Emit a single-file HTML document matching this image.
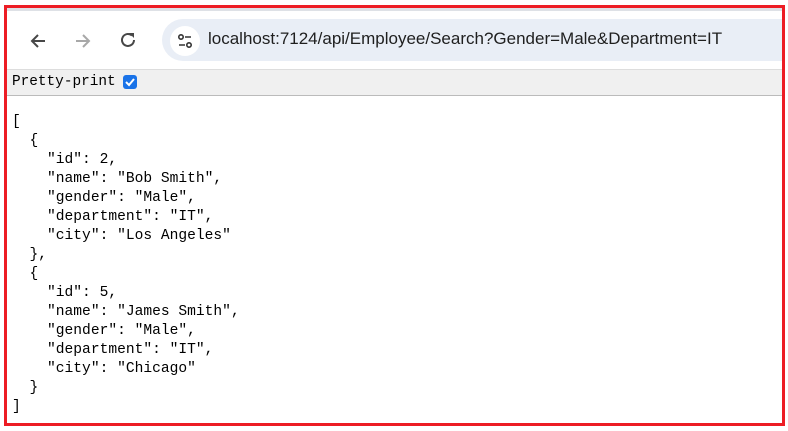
<!DOCTYPE html><html><head><style>
body{margin:0;width:788px;height:431px;background:#fff;position:relative;overflow:hidden;font-family:"Liberation Sans",sans-serif}
.frame{position:absolute;left:4px;top:5px;width:775px;height:415px;border:3px solid #ed1c24}
.tabs{position:absolute;left:7px;top:8px;width:775px;height:3px;background:#dee1e6}
.tool{position:absolute;left:7px;top:11px;width:775px;height:58px;background:#fff}
.url{position:absolute;left:162px;top:19px;width:620px;height:42px;background:#e9eef6;border-radius:21px 0 0 21px}
.url span{position:absolute;left:46px;top:10px;font-size:17px;color:#1f1f1f}
.ic{position:absolute;left:170px;top:26px;width:30px;height:30px;border-radius:15px;background:#fff}
.pp{position:absolute;left:7px;top:69px;width:775px;height:25px;background:#f0f0f0;border-top:1px solid #ddd;border-bottom:1px solid #bbb}
.pp span{position:absolute;left:5px;top:4px;font:14.4px "Liberation Mono",monospace;color:#000}
.cb{position:absolute;left:116px;top:5px;width:14px;height:14px;background:#1a73e8;border-radius:3px}
pre{position:absolute;left:12px;top:113px;margin:0;font:14.6px/19px "Liberation Mono",monospace;color:#000}
</style></head><body>
<div class="tabs"></div>
<div class="tool">
<svg style="position:absolute;left:22px;top:21px" width="18" height="18" viewBox="0 0 18 18"><path d="M16 9H3M9 3L3 9l6 6" stroke="#474747" stroke-width="2" fill="none"/></svg>
<svg style="position:absolute;left:67px;top:21px" width="18" height="18" viewBox="0 0 18 18"><path d="M2 9h13M9 3l6 6-6 6" stroke="#a8a8a8" stroke-width="2" fill="none"/></svg>
<svg style="position:absolute;left:112px;top:20px" width="18" height="18" viewBox="0 0 18 18"><path d="M15 9a6 6 0 1 1-2-4.5" stroke="#474747" stroke-width="2" fill="none"/><path d="M10 2h5v5z" fill="#474747"/></svg>
</div>
<div class="url"><span>localhost:7124/api/Employee/Search?Gender=Male&amp;Department=IT</span></div>
<div class="ic"><svg width="30" height="30" viewBox="0 0 30 30"><circle cx="11" cy="11" r="2.2" stroke="#333" stroke-width="1.6" fill="none"/><path d="M15 11h6M9 19h6" stroke="#333" stroke-width="1.6"/><circle cx="19" cy="19" r="2.2" stroke="#333" stroke-width="1.6" fill="none"/></svg></div>
<div class="pp"><span>Pretty-print</span><div class="cb"><svg width="14" height="14" viewBox="0 0 14 14"><path d="M3 7l3 3 5-6" stroke="#fff" stroke-width="2" fill="none"/></svg></div></div>
<pre>[
  {
    "id": 2,
    "name": "Bob Smith",
    "gender": "Male",
    "department": "IT",
    "city": "Los Angeles"
  },
  {
    "id": 5,
    "name": "James Smith",
    "gender": "Male",
    "department": "IT",
    "city": "Chicago"
  }
]</pre>
<div class="frame"></div>
</body></html>
